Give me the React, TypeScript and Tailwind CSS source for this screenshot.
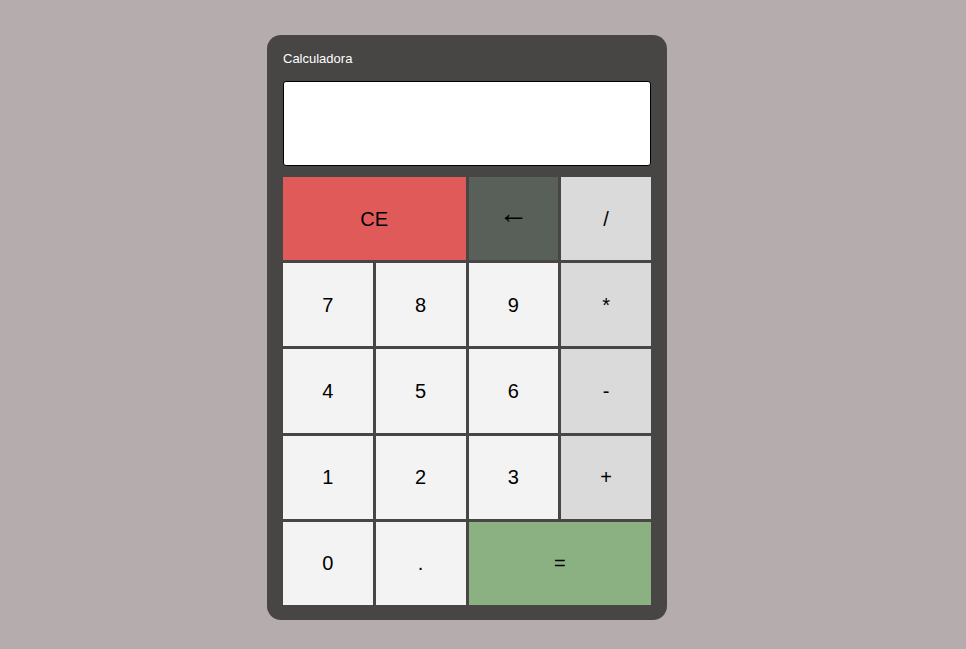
import { useState } from "react";

type Key = {
  label: string;
  className: string;
};

const keys: Key[] = [
  { label: "CE", className: "col-span-2 bg-[#e05a5a]" },
  { label: "←", className: "bg-[#596059] pb-[12px] text-[30px]" },
  { label: "/", className: "bg-[#dadada]" },
  { label: "7", className: "bg-[#f3f3f3]" },
  { label: "8", className: "bg-[#f3f3f3]" },
  { label: "9", className: "bg-[#f3f3f3]" },
  { label: "*", className: "bg-[#dadada]" },
  { label: "4", className: "bg-[#f3f3f3]" },
  { label: "5", className: "bg-[#f3f3f3]" },
  { label: "6", className: "bg-[#f3f3f3]" },
  { label: "-", className: "bg-[#dadada]" },
  { label: "1", className: "bg-[#f3f3f3]" },
  { label: "2", className: "bg-[#f3f3f3]" },
  { label: "3", className: "bg-[#f3f3f3]" },
  { label: "+", className: "bg-[#dadada]" },
  { label: "0", className: "bg-[#f3f3f3]" },
  { label: ".", className: "bg-[#f3f3f3]" },
  { label: "=", className: "col-span-2 bg-[#8bb081]" },
];

export default function App() {
  const [value, setValue] = useState("");

  const press = (label: string) => {
    if (label === "CE") return setValue("");
    if (label === "←") return setValue((v) => v.slice(0, -1));
    if (label === "=") {
      try {
        // eslint-disable-next-line no-new-func
        const result = Function(`"use strict"; return (${value || 0})`)();
        setValue(String(result));
      } catch {
        setValue("Erro");
      }
      return;
    }
    setValue((v) => v + label);
  };

  return (
    <div className="flex min-h-screen justify-center bg-[#b5adad] pt-[35px] pr-8 font-['Liberation_Sans',Arial,sans-serif]">
      <div className="h-[585px] w-[400px] rounded-[14px] bg-[#484645] px-4 pt-4 pb-[15px]">
        <h1 className="text-[13px] leading-[15px] text-white">Calculadora</h1>

        {/* Display */}
        <input
          readOnly
          value={value}
          className="mt-[15px] block h-[85px] w-full rounded-[3px] border border-black bg-white px-3 text-right text-3xl text-black outline-none"
        />

        {/* Keypad */}
        <div className="mt-[11px] grid h-[428px] grid-cols-4 grid-rows-5 gap-[3px]">
          {keys.map((k) => (
            <button
              key={k.label}
              onClick={() => press(k.label)}
              className={`flex items-center justify-center text-[20px] text-black ${k.className}`}
            >
              {k.label}
            </button>
          ))}
        </div>
      </div>
    </div>
  );
}
